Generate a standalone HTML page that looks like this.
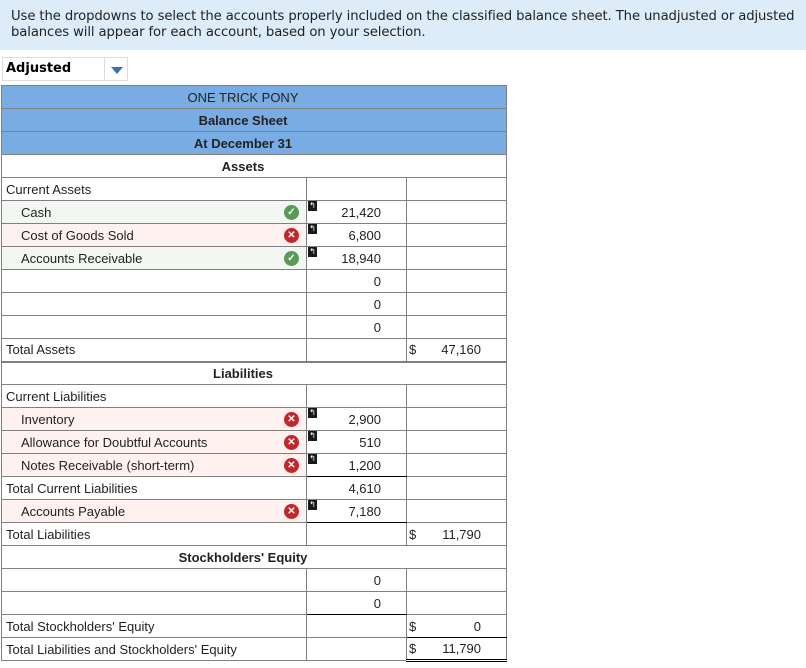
<!DOCTYPE html>
<html><head><style>
body{margin:0;width:806px;height:668px;background:#fff;position:relative;font-family:"Liberation Sans",Arial,sans-serif;overflow:hidden}
.ban{position:absolute;left:0;top:0;width:806px;height:50px;background:#dcecf9;font-family:"DejaVu Sans",Verdana,sans-serif;font-size:13.2px;color:#222;line-height:16px;padding:9px 6px 0 11px;box-sizing:border-box;letter-spacing:-0.1px}
.dd{position:absolute;left:2px;top:57px;width:126px;height:24px;border:1px solid #ddd;box-sizing:border-box;font-family:"DejaVu Sans",Verdana,sans-serif;font-weight:bold;font-size:13px;line-height:22px;padding-left:3px}
.dd .sep{position:absolute;left:101px;top:0;height:22px;border-left:1px solid #ddd}
.dd .tri{position:absolute;left:108px;top:9px;width:0;height:0;border-left:6px solid transparent;border-right:6px solid transparent;border-top:7px solid #3a6fb8}
table{position:absolute;left:1px;top:85px;border-collapse:collapse;font-size:13px;color:#222}
td{border:1px solid #808080;height:23px;padding:0;box-sizing:border-box;white-space:nowrap;position:relative}
.h{background:#78ace3;text-align:center;padding-right:22px}
.c{text-align:center;font-weight:bold;padding-right:22px}
.b{font-weight:bold}
.l{padding-left:4px}
.i{padding-left:19px}
.g{background:#f3f7f2}
.r{background:#fff1f0}
.n{text-align:right;padding-right:25px}
.t{padding-left:2px}
.t span{position:absolute;right:25px}
.ub{border-bottom:1px solid #000}
.db{border-bottom:3px double #000}
.ok,.x{position:absolute;right:7px;top:4px;width:15px;height:15px;border-radius:50%;color:#fff;font-size:10px;line-height:15px;text-align:center;font-weight:bold}
.ok{background:#5a9a55}
.x{background:#c0282d}
.ar{position:absolute;left:1px;top:0;width:9px;height:10px;background:#1a1a1a;color:#fff;font-size:8px;line-height:10px;text-align:center}
</style></head><body>
<div class="ban">Use the dropdowns to select the accounts properly included on the classified balance sheet. The unadjusted or adjusted balances will appear for each account, based on your selection.</div>
<div class="dd">Adjusted<span class="sep"></span><span class="tri"></span></div>
<table>
<colgroup><col style="width:305px"><col style="width:100px"><col style="width:100px"></colgroup>
<tr><td colspan="3" class="h">ONE TRICK PONY</td></tr>
<tr><td colspan="3" class="h b">Balance Sheet</td></tr>
<tr><td colspan="3" class="h b">At December 31</td></tr>
<tr><td colspan="3" class="c">Assets</td></tr>
<tr><td class="l">Current Assets</td><td></td><td></td></tr>
<tr><td class="i g">Cash<span class="ok">✓</span></td><td class="n"><span class="ar">↰</span>21,420</td><td></td></tr>
<tr><td class="i r">Cost of Goods Sold<span class="x">✕</span></td><td class="n"><span class="ar">↰</span>6,800</td><td></td></tr>
<tr><td class="i g">Accounts Receivable<span class="ok">✓</span></td><td class="n"><span class="ar">↰</span>18,940</td><td></td></tr>
<tr><td></td><td class="n">0</td><td></td></tr>
<tr><td></td><td class="n">0</td><td></td></tr>
<tr><td></td><td class="n">0</td><td></td></tr>
<tr><td class="l">Total Assets</td><td></td><td class="t ub">$<span>47,160</span></td></tr>
<tr><td colspan="3" class="c" style="border-top:2px solid #808080">Liabilities</td></tr>
<tr><td class="l">Current Liabilities</td><td></td><td></td></tr>
<tr><td class="i r">Inventory<span class="x">✕</span></td><td class="n"><span class="ar">↰</span>2,900</td><td></td></tr>
<tr><td class="i r">Allowance for Doubtful Accounts<span class="x">✕</span></td><td class="n"><span class="ar">↰</span>510</td><td></td></tr>
<tr><td class="i r">Notes Receivable (short-term)<span class="x">✕</span></td><td class="n ub"><span class="ar">↰</span>1,200</td><td></td></tr>
<tr><td class="l">Total Current Liabilities</td><td class="n">4,610</td><td></td></tr>
<tr><td class="i r">Accounts Payable<span class="x">✕</span></td><td class="n ub"><span class="ar">↰</span>7,180</td><td></td></tr>
<tr><td class="l">Total Liabilities</td><td></td><td class="t">$<span>11,790</span></td></tr>
<tr><td colspan="3" class="c">Stockholders' Equity</td></tr>
<tr><td></td><td class="n">0</td><td></td></tr>
<tr><td></td><td class="n ub">0</td><td></td></tr>
<tr><td class="l">Total Stockholders' Equity</td><td></td><td class="t ub">$<span>0</span></td></tr>
<tr><td class="l">Total Liabilities and Stockholders' Equity</td><td></td><td class="t db">$<span>11,790</span></td></tr>
</table>
</body></html>
